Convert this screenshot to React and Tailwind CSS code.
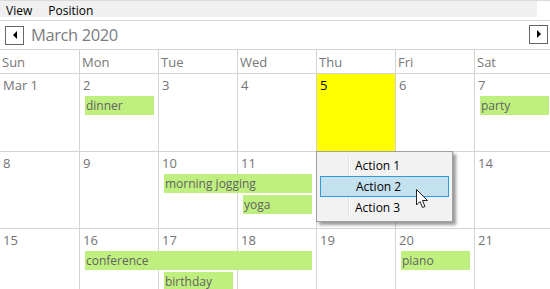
import React from "react";

const days = ["Sun", "Mon", "Tue", "Wed", "Thu", "Fri", "Sat"];
const colStart = ["col-start-1", "col-start-2", "col-start-3", "col-start-4", "col-start-5", "col-start-6", "col-start-7"];
const colSpan = ["col-span-1", "col-span-2", "col-span-3"];

const weeks = [
  {
    dates: ["Mar 1", "2", "3", "4", "5", "6", "7"],
    today: 4,
    events: [
      { c: 1, s: 1, lane: 1, t: "dinner" },
      { c: 6, s: 1, lane: 1, t: "party" },
    ],
  },
  {
    dates: ["8", "9", "10", "11", "12", "13", "14"],
    events: [
      { c: 2, s: 2, lane: 1, t: "morning jogging" },
      { c: 3, s: 1, lane: 2, t: "yoga" },
    ],
  },
  {
    dates: ["15", "16", "17", "18", "19", "20", "21"],
    events: [
      { c: 1, s: 3, lane: 1, t: "conference" },
      { c: 5, s: 1, lane: 1, t: "piano" },
      { c: 2, s: 1, lane: 2, t: "birthday" },
    ],
  },
];

function Week({ w, h }) {
  return (
    <div
      className={`grid grid-cols-[repeat(7,79px)] grid-rows-[22px_19px_2px_19px_1fr] border-b border-[#d4d4d4] ${h}`}
    >
      {w.dates.map((d, i) => (
        <div
          key={i}
          className={`${colStart[i]} row-start-1 row-span-full ${i > 0 ? "border-l border-[#d4d4d4]" : ""} ${
            w.today === i ? "bg-[#ffff00] text-black" : "text-[#737373]"
          } pl-[3px] pt-[3px] text-[13px] leading-[17px]`}
        >
          {d}
        </div>
      ))}
      {w.events.map((e, i) => (
        <div
          key={"e" + i}
          className={`${colStart[e.c]} ${colSpan[e.s - 1]} ${e.lane === 1 ? "row-start-2" : "row-start-4"} ml-[6px] mr-[4px] bg-[#bfef7f] text-[#636363] text-[12px] leading-[19px] pl-[1px] whitespace-nowrap overflow-hidden`}
        >
          {e.t}
        </div>
      ))}
    </div>
  );
}

export default function App() {
  return (
    <div
      className="relative w-[550px] h-[289px] overflow-hidden bg-white"
      style={{ fontFamily: '"Open Sans", "Noto Sans", sans-serif' }}
    >
      <div className="border-t border-[#dadada]">
        <div className="w-[537px] h-[16px] bg-[#f0f0f0] flex items-start text-[12px] leading-[16px] pt-[2px] text-black">
          <span className="ml-[6px]">View</span>
          <span className="ml-[16px]">Position</span>
        </div>
      </div>
      <div className="mt-[3px] border-t border-[#d4d4d4] h-[30px] border-b flex items-center justify-between pl-[5px] pr-[2px]">
        <div className="flex items-center">
          <div className="w-[19px] h-[19px] border border-[#666666] flex items-center justify-center">
            <div className="w-0 h-0 border-y-[4px] border-y-transparent border-r-[4px] border-r-black"></div>
          </div>
          <span className="ml-[7px] text-[16.5px] tracking-[-0.4px] text-[#7a7d82] leading-none">March 2020</span>
        </div>
        <div className="w-[19px] h-[19px] border border-[#666666] flex items-center justify-center -mt-[2px]">
          <div className="w-0 h-0 border-y-[4px] border-y-transparent border-l-[4px] border-l-black"></div>
        </div>
      </div>
      <div className="w-[553px]">
        <div className="grid grid-cols-[repeat(7,79px)] h-[24px] border-b border-[#d4d4d4]">
          {days.map((d, i) => (
            <div
              key={d}
              className={`${i > 0 ? "border-l border-[#d4d4d4]" : ""} pl-[2px] text-[13px] leading-[25px] text-[#777777]`}
            >
              {d}
            </div>
          ))}
        </div>
        <Week w={weeks[0]} h="h-[78px]" />
        <Week w={weeks[1]} h="h-[77px]" />
        <Week w={weeks[2]} h="h-[78px]" />
      </div>

      <div className="absolute left-[316px] top-[151px] w-[137px] h-[71px] border border-[#a0a0a0] bg-[#f2f2f2] shadow-[3px_3px_3px_rgba(0,0,0,0.4)] p-[3px]">
        <div className="absolute left-[31px] top-[3px] bottom-[3px] w-[1px] bg-[#e2e2e2]"></div>
        <div className="absolute left-[32px] top-[3px] bottom-[3px] w-[1px] bg-white"></div>
        {["Action 1", "Action 2", "Action 3"].map((a, i) => (
          <div
            key={a}
            className={`relative h-[21px] flex items-center text-[12px] text-black pl-[35px] ${
              i === 1 ? "bg-[#c4e1ef] border border-[#3399dd] pl-[34px]" : ""
            }`}
          >
            {a}
          </div>
        ))}
      </div>

      <svg className="absolute left-[416px] top-[189px]" width="13" height="20" viewBox="0 0 13 20">
        <path d="M0.5 0.5 L0.5 16 L4 12.5 L6.5 18.5 L9 17.5 L6.5 11.5 L11.5 11.5 Z" fill="white" stroke="#222" strokeWidth="1" strokeLinejoin="round" />
      </svg>
    </div>
  );
}
